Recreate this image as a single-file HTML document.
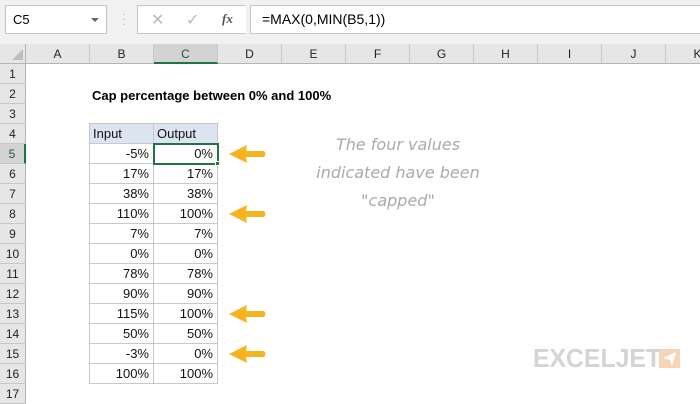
<!DOCTYPE html>
<html><head><meta charset="utf-8"><style>
*{margin:0;padding:0;box-sizing:border-box}
body{width:700px;height:400px;overflow:hidden;background:#fff;font-family:"Liberation Sans",Arial,sans-serif;position:relative}
.a{position:absolute}
.tb{left:0;top:0;width:700px;height:44px;background:#f1f1f1}
.box{background:#fff;border:1px solid #c6c6c6}
.ch{top:44px;height:20px;background:#e6e6e6;border-right:1px solid #c8c8c8;border-bottom:1px solid #b5b5b5;font-size:12px;color:#222;text-align:center;line-height:20px}
.rh{left:0;width:26px;height:20px;background:#e6e6e6;border-bottom:1px solid #c8c8c8;border-right:1px solid #b5b5b5;font-size:12px;color:#222;text-align:center;line-height:20px}
.c{height:20px;width:64px;border-right:1px solid #c8c8c8;border-bottom:1px solid #c8c8c8;font-size:13px;text-align:right;padding-right:4px;line-height:20px;color:#111}
.h{background:#dce3f1;text-align:left;padding-left:3px}
.note{left:300px;width:196px;text-align:center;color:#aaa;font-size:16px;font-style:italic;font-family:"DejaVu Sans",sans-serif;line-height:28px;top:131px}
</style></head><body>
<div class="a tb"></div>
<div class="a box" style="left:5px;top:5px;width:102px;height:29px;font-size:13px;line-height:27px;padding-left:7px">C5</div>
<div class="a" style="left:91px;top:18px;border-left:4px solid transparent;border-right:4px solid transparent;border-top:4px solid #666"></div>
<div class="a" style="left:122px;top:12px;color:#aaa;font-size:10px;line-height:5px">·<br>·<br>·</div>
<div class="a box" style="left:137px;top:5px;width:109px;height:29px;border-right:none"></div>
<div class="a" style="left:151px;top:10px;color:#bbb;font-size:16px">✕</div>
<div class="a" style="left:186px;top:10px;color:#bbb;font-size:16px">✓</div>
<div class="a" style="left:222px;top:11px;color:#555;font-size:13px;font-style:italic;font-family:'Liberation Serif',serif;font-weight:bold">fx</div>
<div class="a box" style="left:250px;top:5px;width:455px;height:29px;font-size:14px;line-height:27px;padding-left:11px">=MAX(0,MIN(B5,1))</div>
<div class="a" style="left:0;top:44px;width:26px;height:20px;background:#e6e6e6;border-right:1px solid #b5b5b5;border-bottom:1px solid #b5b5b5"></div>
<div class="a" style="left:12px;top:49px;border-left:11px solid transparent;border-bottom:11px solid #bdbdbd"></div>
<div class="a ch" style="left:26px;width:64px">A</div>
<div class="a ch" style="left:90px;width:64px">B</div>
<div class="a ch" style="left:154px;width:64px;background:#d3d3d3;border-bottom:2px solid #217346;color:#185c37">C</div>
<div class="a ch" style="left:218px;width:64px">D</div>
<div class="a ch" style="left:282px;width:64px">E</div>
<div class="a ch" style="left:346px;width:64px">F</div>
<div class="a ch" style="left:410px;width:64px">G</div>
<div class="a ch" style="left:474px;width:64px">H</div>
<div class="a ch" style="left:538px;width:64px">I</div>
<div class="a ch" style="left:602px;width:64px">J</div>
<div class="a ch" style="left:666px;width:64px">K</div>
<div class="a rh" style="top:64px">1</div><div class="a rh" style="top:84px">2</div><div class="a rh" style="top:104px">3</div><div class="a rh" style="top:124px">4</div>
<div class="a rh" style="top:144px;background:#d3d3d3;border-right:2px solid #217346;color:#185c37">5</div>
<div class="a rh" style="top:164px">6</div><div class="a rh" style="top:184px">7</div><div class="a rh" style="top:204px">8</div><div class="a rh" style="top:224px">9</div><div class="a rh" style="top:244px">10</div><div class="a rh" style="top:264px">11</div><div class="a rh" style="top:284px">12</div><div class="a rh" style="top:304px">13</div><div class="a rh" style="top:324px">14</div><div class="a rh" style="top:344px">15</div><div class="a rh" style="top:364px">16</div><div class="a rh" style="top:384px">17</div>
<div class="a" style="left:92px;top:86px;font-size:13px;font-weight:bold;line-height:20px">Cap percentage between 0% and 100%</div>
<div class="a" style="left:89px;top:123px;width:130px;height:261px;border:1px solid #c8c8c8;border-right:none;border-bottom:none"></div>
<div class="a c h" style="left:90px;top:124px">Input</div><div class="a c h" style="left:154px;top:124px">Output</div>
<div class="a c" style="left:90px;top:144px">-5%</div><div class="a c" style="left:154px;top:144px">0%</div>
<div class="a c" style="left:90px;top:164px">17%</div><div class="a c" style="left:154px;top:164px">17%</div>
<div class="a c" style="left:90px;top:184px">38%</div><div class="a c" style="left:154px;top:184px">38%</div>
<div class="a c" style="left:90px;top:204px">110%</div><div class="a c" style="left:154px;top:204px">100%</div>
<div class="a c" style="left:90px;top:224px">7%</div><div class="a c" style="left:154px;top:224px">7%</div>
<div class="a c" style="left:90px;top:244px">0%</div><div class="a c" style="left:154px;top:244px">0%</div>
<div class="a c" style="left:90px;top:264px">78%</div><div class="a c" style="left:154px;top:264px">78%</div>
<div class="a c" style="left:90px;top:284px">90%</div><div class="a c" style="left:154px;top:284px">90%</div>
<div class="a c" style="left:90px;top:304px">115%</div><div class="a c" style="left:154px;top:304px">100%</div>
<div class="a c" style="left:90px;top:324px">50%</div><div class="a c" style="left:154px;top:324px">50%</div>
<div class="a c" style="left:90px;top:344px">-3%</div><div class="a c" style="left:154px;top:344px">0%</div>
<div class="a c" style="left:90px;top:364px">100%</div><div class="a c" style="left:154px;top:364px">100%</div>
<div class="a" style="left:153px;top:143px;width:66px;height:22px;border:2px solid #217346"></div>
<div class="a" style="left:215px;top:161px;width:5px;height:5px;background:#217346;border:1px solid #fff"></div>
<svg class="a" style="left:0;top:0" width="700" height="400">
<g fill="#f4b41f">
<path d="M229 154 L247 145 L246 151 L264 151 Q267 154 264 157 L246 157 L247 163 Z"/>
<path d="M229 214 L247 205 L246 211 L264 211 Q267 214 264 217 L246 217 L247 223 Z"/>
<path d="M229 314 L247 305 L246 311 L264 311 Q267 314 264 317 L246 317 L247 323 Z"/>
<path d="M229 354 L247 345 L246 351 L264 351 Q267 354 264 357 L246 357 L247 363 Z"/>
</g>
<text x="533" y="367" font-family="Liberation Sans" font-weight="bold" font-size="26" fill="#d4d4d4" textLength="128" lengthAdjust="spacingAndGlyphs">EXCELJET</text>
<rect x="659" y="349" width="21" height="19" fill="#f7d3b8"/>
<path d="M663 358 L676 352 L672 366 L670 360 Z" fill="#fff"/>
</svg>
<div class="a note">The four values<br>indicated have been<br>"capped"</div>
</body></html>
